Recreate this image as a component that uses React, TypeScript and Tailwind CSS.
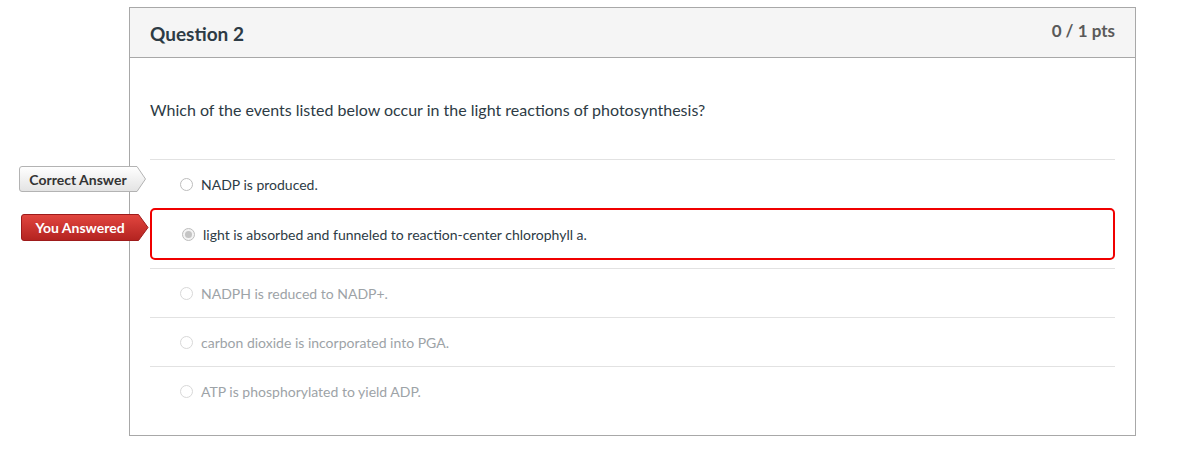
import React from 'react';

type Answer = {
  text: string;
  state: 'correct' | 'wrong' | 'none';
};

const answers: Answer[] = [
  { text: 'NADP is produced.', state: 'correct' },
  { text: 'light is absorbed and funneled to reaction-center chlorophyll a.', state: 'wrong' },
  { text: 'NADPH is reduced to NADP+.', state: 'none' },
  { text: 'carbon dioxide is incorporated into PGA.', state: 'none' },
  { text: 'ATP is phosphorylated to yield ADP.', state: 'none' },
];

function Flag({ kind }: { kind: 'correct' | 'wrong' }) {
  const red = kind === 'wrong';
  const id = red ? 'flagRed' : 'flagGray';
  return (
    <div className={`absolute h-[27px] w-[128px] ${red ? 'left-[-129px] top-[6px]' : 'left-[-131px] top-[6px]'}`}>
      <svg width="128" height="27" viewBox="0 0 128 27" className="absolute inset-0">
        <defs>
          <linearGradient id={id} x1="0" y1="0" x2="0" y2="1">
            <stop offset="0" stopColor={red ? '#e2463f' : '#ffffff'} />
            <stop offset="1" stopColor={red ? '#b32320' : '#e3e3e3'} />
          </linearGradient>
        </defs>
        <path
          d={red
            ? 'M3,0.5 H117.5 L127,13.5 L117.5,26.5 H3 Q0.5,26.5 0.5,24 V3 Q0.5,0.5 3,0.5 Z'
            : 'M3,0.5 H118 L126.5,13 L118,25.5 H3 Q0.5,25.5 0.5,23 V3 Q0.5,0.5 3,0.5 Z'}
          fill={`url(#${id})`}
          stroke={red ? '#9e1b1b' : '#b3b3b3'}
          strokeWidth="1"
        />
      </svg>
      <div
        className={`relative flex w-[118px] items-center justify-center text-[14px] font-bold ${
          red ? 'h-[27px] text-white' : 'h-[26px] text-[#333]'
        }`}
      >
        {red ? 'You Answered' : 'Correct Answer'}
      </div>
    </div>
  );
}

function Radio({ selected, faded }: { selected: boolean; faded: boolean }) {
  return (
    <span
      className={`flex h-[13px] w-[13px] shrink-0 items-center justify-center rounded-full border ${
        faded ? 'border-[#d8d8d8]' : 'border-[#bdbdbd]'
      } ${selected ? 'bg-[#f3f3f3]' : 'bg-white'}`}
    >
      {selected && <span className="h-[7px] w-[7px] rounded-full bg-[#c4c4c4]" />}
    </span>
  );
}

export default function App() {
  return (
    <div className="min-h-[454px] bg-white pt-[7px] font-['Lato','Liberation_Sans',sans-serif]">
      <div className="ml-[129px] w-[1007px] border border-[#a8a8a8] bg-white">
        {/* Header */}
        <div className="flex h-[50px] items-start justify-between border-b border-[#a8a8a8] bg-[#f5f5f5] px-[20px]">
          <h2 className="mt-[12px] text-[19px] font-bold text-[#2d3b45]">Question 2</h2>
          <div className="mt-[10px] text-[17px] font-bold text-[#5a5a5a]">0 / 1 pts</div>
        </div>

        {/* Body */}
        <div className="px-[20px] pb-[20px]">
          <p className="mt-[40px] mb-[37px] text-[16px] leading-[24px] text-[#2d3b45]">
            Which of the events listed below occur in the light reactions of photosynthesis?
          </p>

          <div>
            {answers.map((a, i) => {
              if (a.state === 'wrong') {
                return (
                  <div key={i} className="relative mb-[8px]">
                    <Flag kind="wrong" />
                    <div className="flex h-[52px] items-center gap-[8px] rounded-[5px] border-2 border-[#f00000] pl-[30px] text-[14px] text-[#2d3b45]">
                      <Radio selected faded={false} />
                      <span>{a.text}</span>
                    </div>
                  </div>
                );
              }
              const faded = a.state === 'none';
              return (
                <div
                  key={i}
                  className={`relative flex h-[49px] items-center gap-[8px] pl-[30px] text-[14px] ${
                    i === 0 || i > 1 ? 'border-t border-[#e2e2e2]' : ''
                  } ${faded ? 'text-[#9da3a7]' : 'text-[#2d3b45]'}`}
                >
                  {a.state === 'correct' && <Flag kind="correct" />}
                  <Radio selected={false} faded={faded} />
                  <span>{a.text}</span>
                </div>
              );
            })}
          </div>
        </div>
      </div>
    </div>
  );
}
